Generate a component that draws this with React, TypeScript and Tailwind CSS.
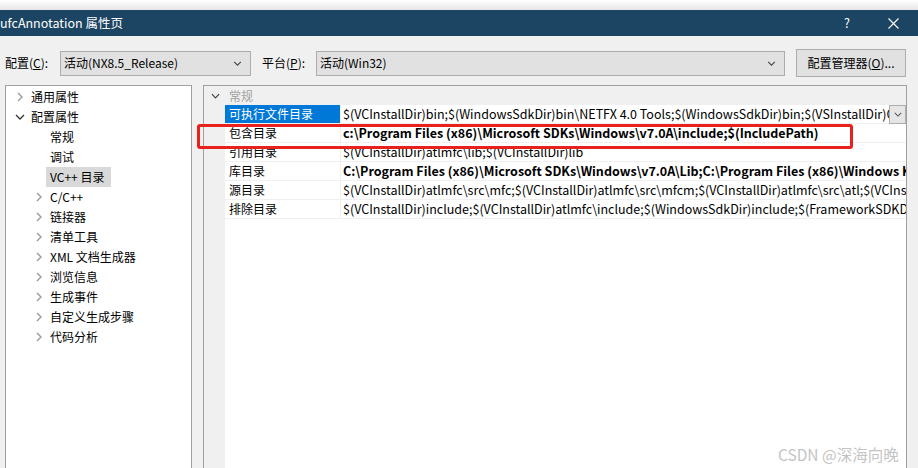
import React from "react";

const FONT = { fontFamily: '"Noto Sans CJK SC", "Noto Sans", sans-serif' };

type TreeItem = {
  label: string;
  level: 0 | 1;
  chevron?: "right" | "down";
  selected?: boolean;
};

const TREE: TreeItem[] = [
  { label: "通用属性", level: 0, chevron: "right" },
  { label: "配置属性", level: 0, chevron: "down" },
  { label: "常规", level: 1 },
  { label: "调试", level: 1 },
  { label: "VC++ 目录", level: 1, selected: true },
  { label: "C/C++", level: 1, chevron: "right" },
  { label: "链接器", level: 1, chevron: "right" },
  { label: "清单工具", level: 1, chevron: "right" },
  { label: "XML 文档生成器", level: 1, chevron: "right" },
  { label: "浏览信息", level: 1, chevron: "right" },
  { label: "生成事件", level: 1, chevron: "right" },
  { label: "自定义生成步骤", level: 1, chevron: "right" },
  { label: "代码分析", level: 1, chevron: "right" },
];

type Prop = { name: string; value: string; bold?: boolean; selected?: boolean };

const PROPS: Prop[] = [
  {
    name: "可执行文件目录",
    value:
      "$(VCInstallDir)bin;$(WindowsSdkDir)bin\\NETFX 4.0 Tools;$(WindowsSdkDir)bin;$(VSInstallDir)Common7\\Tools\\bin;$(VSInstallDir)Common7\\tools",
    selected: true,
  },
  {
    name: "包含目录",
    value: "c:\\Program Files (x86)\\Microsoft SDKs\\Windows\\v7.0A\\include;$(IncludePath)",
    bold: true,
  },
  { name: "引用目录", value: "$(VCInstallDir)atlmfc\\lib;$(VCInstallDir)lib" },
  {
    name: "库目录",
    value:
      "C:\\Program Files (x86)\\Microsoft SDKs\\Windows\\v7.0A\\Lib;C:\\Program Files (x86)\\Windows Kits\\8.1\\Lib",
    bold: true,
  },
  {
    name: "源目录",
    value:
      "$(VCInstallDir)atlmfc\\src\\mfc;$(VCInstallDir)atlmfc\\src\\mfcm;$(VCInstallDir)atlmfc\\src\\atl;$(VCInstallDir)crt\\src",
  },
  {
    name: "排除目录",
    value:
      "$(VCInstallDir)include;$(VCInstallDir)atlmfc\\include;$(WindowsSdkDir)include;$(FrameworkSDKDir)\\include",
  },
];

function ChevronRight({ className = "" }: { className?: string }) {
  return (
    <svg width="6" height="10" viewBox="0 0 6 10" className={className}>
      <path d="M1 1 L5 5 L1 9" fill="none" stroke="currentColor" strokeWidth="1.4" />
    </svg>
  );
}

function ChevronDown({ className = "", w = 10, h = 6 }: { className?: string; w?: number; h?: number }) {
  return (
    <svg width={w} height={h} viewBox="0 0 10 6" className={className}>
      <path d="M1 1 L5 5 L9 1" fill="none" stroke="currentColor" strokeWidth="1.3" />
    </svg>
  );
}

function Combo({ text, width }: { text: string; width: string }) {
  return (
    <div
      className={`${width} flex h-[25px] shrink-0 items-center justify-between border border-[#adadad] bg-[#e1e1e1] pl-[3px] pr-[8px] text-[12px] text-black`}
    >
      <span>{text}</span>
      <ChevronDown className="text-[#444]" w={9} h={5} />
    </div>
  );
}

export default function App() {
  return (
    <div
      className="relative h-[468px] w-[918px] overflow-hidden bg-[#f0f0f0] text-[12px] text-black"
      style={FONT}
    >
      {/* shadow strip above window */}
      <div className="h-[10px] bg-gradient-to-b from-white to-[#e6e6e6]" />

      {/* title bar */}
      <div className="flex h-[26px] items-center bg-[#1b4562] text-white">
        <span className="flex-1 text-[12.5px]">ufcAnnotation 属性页</span>
        <span className="mr-[38px] text-[12.5px]">?</span>
        <svg width="11" height="11" viewBox="0 0 11 11" className="mr-[19px]">
          <path d="M0.5 0.5 L10.5 10.5 M10.5 0.5 L0.5 10.5" stroke="white" strokeWidth="1.1" />
        </svg>
      </div>

      {/* toolbar */}
      <div className="mt-[13px] flex h-[28px] items-center pl-[5px]">
        <span className="w-[55px] shrink-0">
          配置(<span className="underline">C</span>):
        </span>
        <Combo text="活动(NX8.5_Release)" width="w-[191px]" />
        <span className="ml-[11px] w-[54px] shrink-0">
          平台(<span className="underline">P</span>):
        </span>
        <Combo text="活动(Win32)" width="w-[469px]" />
        <button
          type="button"
          className="ml-[11px] flex h-[28px] w-[110px] shrink-0 items-center justify-center border border-[#adadad] bg-[#e1e1e1]"
        >
          配置管理器(<span className="underline">O</span>)...
        </button>
      </div>

      {/* main area */}
      <div className="mt-[8px] flex h-[400px]">
        {/* tree */}
        <div className="ml-[5px] w-[187px] shrink-0 border border-[#a0a0a0] bg-white pt-[1px]">
          {TREE.map((item) => (
            <div key={item.label} className="flex h-[20px] items-center">
              <div
                className={
                  item.level === 0
                    ? "flex w-[25px] justify-center pl-[2px]"
                    : "ml-[22px] flex w-[22px] justify-center"
                }
              >
                {item.chevron === "right" && <ChevronRight className="text-[#9a9a9a]" />}
                {item.chevron === "down" && <ChevronDown className="text-[#333]" />}
              </div>
              <span
                className={
                  item.selected
                    ? "-ml-[4px] flex h-[20px] items-center bg-[#d9d9d9] pl-[4px] pr-[7px]"
                    : ""
                }
              >
                {item.label}
              </span>
            </div>
          ))}
        </div>

        {/* property grid */}
        <div className="ml-[11px] flex w-[704px] shrink-0 flex-col overflow-hidden border border-[#a0a0a0] bg-white">
          <div className="flex h-[19px] shrink-0 items-center bg-[#f0f0f0]">
            <div className="flex w-[25px] justify-center pr-[3px]">
              <ChevronDown className="text-[#444]" w={9} h={6} />
            </div>
            <span className="text-[#a0a0a0]">常规</span>
          </div>
          <div className="flex min-h-0 flex-1">
            <div className="w-[21px] shrink-0 bg-[#f0f0f0]" />
            <div className="min-w-0 flex-1">
              {PROPS.map((p) => (
                <div key={p.name} className="relative flex h-[19px] border-b border-[#f0f0f0]">
                  <div
                    className={`flex w-[116px] shrink-0 items-center border-r border-[#f0f0f0] pl-[4px] ${
                      p.selected ? "bg-[#0078d7] text-white" : ""
                    }`}
                  >
                    {p.name}
                  </div>
                  <div
                    className={`flex min-w-0 flex-1 items-center overflow-hidden whitespace-nowrap pl-[2px] text-[12.5px] ${
                      p.bold ? "font-bold" : ""
                    }`}
                  >
                    {p.value}
                  </div>
                  {p.selected && (
                    <div className="absolute right-0 top-0 flex h-[19px] w-[17px] items-center justify-center border border-[#adadad] bg-[#e6e6e6]">
                      <ChevronDown className="text-[#555]" w={8} h={5} />
                    </div>
                  )}
                </div>
              ))}
            </div>
          </div>
        </div>
      </div>

      {/* red annotation box */}
      <div className="absolute left-[197px] top-[124px] h-[25px] w-[656px] rounded-[3px] border-[3px] border-[#e8211c]" />

      {/* watermark */}
      <div className="absolute left-[778px] top-[443px] whitespace-nowrap text-[15.5px] text-[#c4c4c4]">
        CSDN @深海向晚
      </div>
    </div>
  );
}
